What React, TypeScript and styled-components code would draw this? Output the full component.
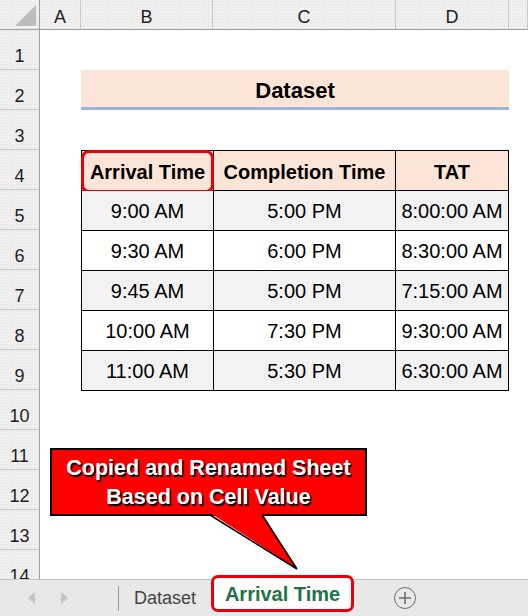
import React from "react";
import styled, { createGlobalStyle, css } from "styled-components";

const GlobalStyle = createGlobalStyle`
  html, body {
    margin: 0;
    padding: 0;
    background: #ffffff;
  }
  * {
    box-sizing: border-box;
  }
`;

const font = `"Liberation Sans", Arial, sans-serif`;

const Page = styled.div`
  position: relative;
  width: 528px;
  height: 616px;
  overflow: hidden;
  display: flex;
  flex-direction: column;
  font-family: ${font};
  color: #000;
  background: #fff;
`;

const SheetGrid = styled.div`
  flex: 1;
  min-height: 0;
  overflow: hidden;
  display: grid;
  grid-template-columns: 40px 41px 132px 183px 113px 1fr;
  grid-template-rows: 30px repeat(14, 40px);
`;

const headerBg = css`
  background-color: #efefef;
  background-image: radial-gradient(#e3e3e3 0.6px, transparent 0.7px);
  background-size: 3px 3px;
`;

const Corner = styled.div`
  ${headerBg};
  border-right: 1px solid #9e9e9e;
  border-bottom: 1px solid #9e9e9e;
  display: flex;
  align-items: flex-end;
  justify-content: flex-end;
  padding: 0 3px 3px 0;
`;

const ColHead = styled.div`
  ${headerBg};
  border-right: 1px solid #c8c8c8;
  border-bottom: 1px solid #9e9e9e;
  display: flex;
  align-items: center;
  justify-content: center;
  padding-top: 6px;
  font-size: 18px;
  color: #1e1e1e;
`;

const RowHead = styled.div`
  ${headerBg};
  grid-column: 1;
  border-right: 1px solid #9e9e9e;
  border-bottom: 1px solid #c8c8c8;
  display: flex;
  align-items: flex-end;
  justify-content: center;
  padding-bottom: 2px;
  font-size: 18px;
  color: #1e1e1e;
`;

const Title = styled.div`
  grid-column: 3 / 6;
  grid-row: 3;
  background: #fce4d6;
  border-bottom: 3px solid #9db2df;
  display: flex;
  align-items: center;
  justify-content: center;
  padding-top: 5px;
  font-weight: 700;
  font-size: 22px;
`;

const Table = styled.div`
  grid-column: 3 / 6;
  grid-row: 5 / 11;
  align-self: start;
  display: grid;
  grid-template-columns: 132px 182px 113px;
  grid-auto-rows: 40px;
  border-top: 1px solid #000;
  border-left: 1px solid #000;
`;

const Cell = styled.div<{ $head?: boolean; $shade?: boolean; $mark?: boolean }>`
  position: relative;
  border-right: 1px solid #000;
  border-bottom: 1px solid #000;
  display: flex;
  align-items: center;
  justify-content: center;
  padding-top: ${(p) => (p.$head ? "3px" : "1px")};
  white-space: nowrap;
  font-size: 20px;
  background: ${(p) => (p.$head ? "#fce4d6" : p.$shade ? "#f2f2f2" : "#fff")};
  font-weight: ${(p) => (p.$head ? 700 : 400)};
  ${(p) =>
    p.$mark &&
    css`
      &::after {
        content: "";
        position: absolute;
        left: -1px;
        top: -1px;
        right: -1px;
        bottom: -3px;
        border: 3px solid #e8000b;
        border-radius: 8px;
      }
    `}
`;

const Callout = styled.div`
  position: absolute;
  left: 50px;
  top: 448px;
  width: 317px;
  height: 68px;
  background: #ff0000;
  border: 2px solid #000;
  display: flex;
  flex-direction: column;
  align-items: center;
  justify-content: center;
  padding-top: 2px;
  color: #fff;
  font-weight: 700;
  font-size: 21.5px;
  line-height: 29px;
  text-shadow: 1px 1px 0 #000, 1.5px 1.5px 1px #000;
`;

const Pointer = styled.svg`
  position: absolute;
  left: 200px;
  top: 510px;
  width: 110px;
  height: 66px;
`;

const TabBar = styled.div`
  position: relative;
  height: 37px;
  flex-shrink: 0;
  background: #e8e8e8;
  border-top: 1px solid #c6c6c6;
  display: flex;
  align-items: center;
`;

const NavArrows = styled.div`
  width: 118px;
  display: flex;
  align-items: center;
  gap: 24px;
  padding-left: 28px;
`;

const Separator = styled.div`
  width: 1px;
  height: 25px;
  background: #9a9a9a;
`;

const SheetTab = styled.div`
  padding: 0 15px;
  font-size: 18px;
  color: #444;
`;

const ActiveTab = styled.div`
  align-self: flex-start;
  margin-top: -5px;
  height: 37px;
  width: 143px;
  background: #fff;
  border: 3px solid #e8000b;
  border-radius: 7px;
  display: flex;
  align-items: center;
  justify-content: center;
  padding-top: 2px;
  font-weight: 700;
  font-size: 20px;
  color: #217346;
`;

const AddButton = styled.div`
  margin-left: 40px;
  width: 22px;
  height: 22px;
  border: 1.5px solid #6e6e6e;
  border-radius: 50%;
  display: flex;
  align-items: center;
  justify-content: center;
`;

const columns = ["A", "B", "C", "D", ""];

const rows = [
  ["9:00 AM", "5:00 PM", "8:00:00 AM"],
  ["9:30 AM", "6:00 PM", "8:30:00 AM"],
  ["9:45 AM", "5:00 PM", "7:15:00 AM"],
  ["10:00 AM", "7:30 PM", "9:30:00 AM"],
  ["11:00 AM", "5:30 PM", "6:30:00 AM"],
];

export default function App() {
  return (
    <Page>
      <GlobalStyle />
      <SheetGrid>
        <Corner>
          <svg width="21" height="21" viewBox="0 0 21 21">
            <polygon points="21,0 21,21 0,21" fill="#bdbdbd" />
          </svg>
        </Corner>
        {columns.map((c, i) => (
          <ColHead key={i}>{c}</ColHead>
        ))}
        {Array.from({ length: 14 }, (_, i) => (
          <RowHead key={i} style={{ gridRow: i + 2 }}>
            {i + 1}
          </RowHead>
        ))}
        <Title>Dataset</Title>
        <Table>
          <Cell $head $mark>
            Arrival Time
          </Cell>
          <Cell $head>Completion Time</Cell>
          <Cell $head>TAT</Cell>
          {rows.map((r, i) =>
            r.map((v, j) => (
              <Cell key={`${i}-${j}`} $shade={i % 2 === 0}>
                {v}
              </Cell>
            ))
          )}
        </Table>
      </SheetGrid>

      <TabBar>
        <NavArrows>
          <svg width="8" height="12" viewBox="0 0 8 12">
            <polygon points="7,0 7,12 0,6" fill="#c4c4c4" />
          </svg>
          <svg width="8" height="12" viewBox="0 0 8 12">
            <polygon points="1,0 1,12 8,6" fill="#c4c4c4" />
          </svg>
        </NavArrows>
        <Separator />
        <SheetTab>Dataset</SheetTab>
        <ActiveTab>Arrival Time</ActiveTab>
        <AddButton>
          <svg width="14" height="14" viewBox="0 0 14 14">
            <path d="M7 1v12M1 7h12" stroke="#6e6e6e" strokeWidth="1.6" />
          </svg>
        </AddButton>
      </TabBar>

      <Callout>
        <span>Copied and Renamed Sheet</span>
        <span>Based on Cell Value</span>
      </Callout>
      <Pointer viewBox="0 0 110 66">
        <polygon points="10,3 62,3 97,59" fill="#ff0000" />
        <polyline points="10,5 97,59 62,5" fill="none" stroke="#000" strokeWidth="1.5" />
      </Pointer>
    </Page>
  );
}
